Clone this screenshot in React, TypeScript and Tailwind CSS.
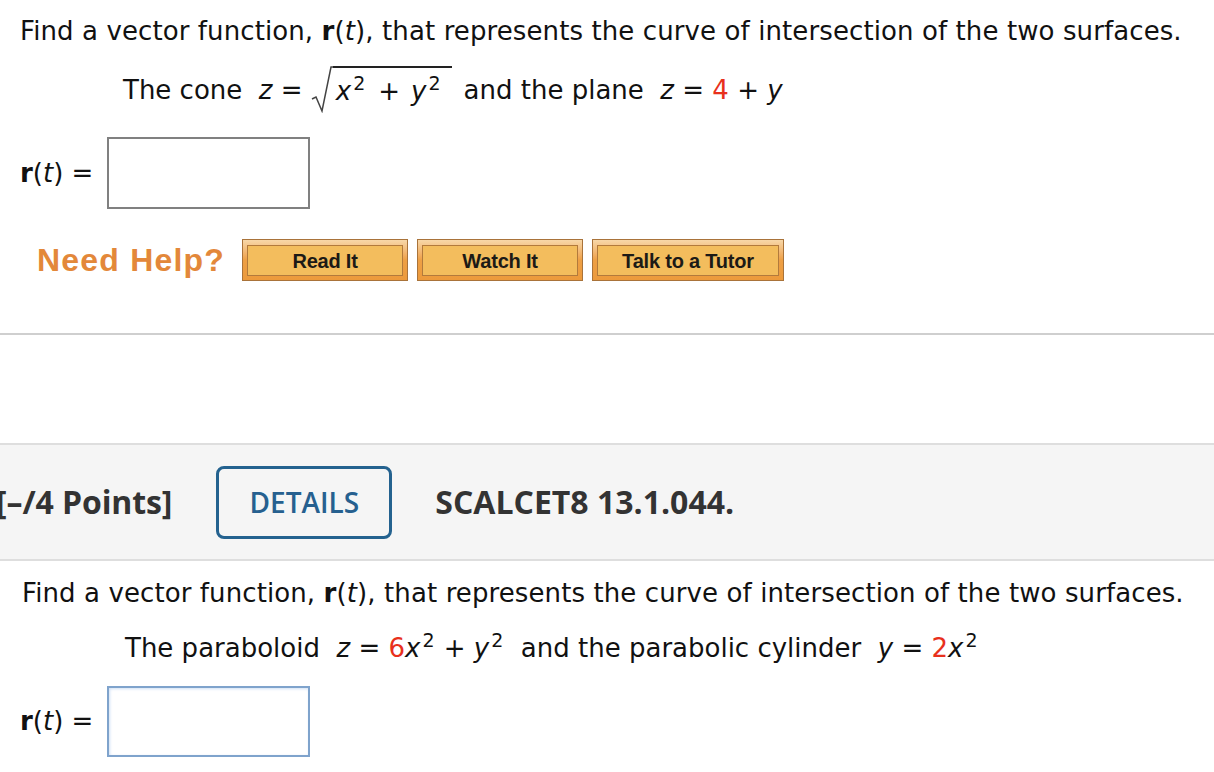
import React from 'react';

const body = { fontFamily: '"DejaVu Sans", Verdana, sans-serif' };
const arial = { fontFamily: '"Liberation Sans", Arial, sans-serif' };

function V({ children }: { children: React.ReactNode }) {
  return <i className="italic">{children}</i>;
}

function Sq({ children }: { children: React.ReactNode }) {
  return <sup className="text-[19px] ml-[2px] mr-[1px] relative -top-[10px]">{children}</sup>;
}

function Red({ children }: { children: React.ReactNode }) {
  return <span className="text-[#e8301c]">{children}</span>;
}

function HelpButton({ label, width }: { label: string; width: string }) {
  return (
    <div className={`${width} h-[42px] border border-[#a9733a] bg-gradient-to-b from-[#f7d7a8] via-[#eea045] to-[#ec9a3c] p-[4px] pt-[5px]`}>
      <div className="h-full border border-[#b27a3c] bg-[#f3bd5d] flex items-center justify-center">
        <span className="text-[20px] font-bold text-[#1c1a16] tracking-[-0.2px]" style={arial}>
          {label}
        </span>
      </div>
    </div>
  );
}

function Rt() {
  return (
    <span className="text-[26px] text-[#111] whitespace-nowrap">
      <b className="font-bold">r</b>(<V>t</V>) =
    </span>
  );
}

export default function App() {
  return (
    <div className="w-[1214px] h-[772px] bg-white overflow-hidden text-[#111]" style={body}>
      <div className="pl-[20px] pt-[14px]">
        <p className="text-[26px] leading-[34px] whitespace-nowrap tracking-[0.1px]">
          Find a vector function, <b className="font-bold">r</b>(<V>t</V>), that represents the curve of intersection of the two surfaces.
        </p>
        <p className="text-[26px] leading-[34px] ml-[103px] mt-[18px] whitespace-nowrap flex items-end">
          <span>The cone&nbsp; <V>z</V> =&nbsp;</span>
          <span className="inline-flex items-end">
            <svg width="22" height="47" viewBox="0 0 22 47" className="-mb-[6px]">
              <path d="M1 33 L5 31 L11 45 L20 1 L22 1" fill="none" stroke="#444" strokeWidth="1.5" />
            </svg>
            <span className="border-t-[2px] border-[#222] leading-[32px] pt-[7px] pr-[10px] pl-[3px]">
              <V>x</V><Sq>2</Sq>
              <span className="ml-[12px] mr-[11px]">+</span>
              <V>y</V><Sq>2</Sq>
            </span>
          </span>
          <span className="ml-[12px]">and the plane&nbsp; <V>z</V> = <Red>4</Red> + <V>y</V></span>
        </p>
        <div className="flex items-center mt-[30px]">
          <Rt />
          <div className="ml-[14px] w-[203px] h-[72px] border-2 border-[#808080] bg-white" />
        </div>
        <div className="flex items-center mt-[30px] pl-[17px]">
          <span className="text-[32px] leading-none font-bold text-[#e3883a] tracking-[1.2px] mr-[17px]" style={arial}>
            Need Help?
          </span>
          <div className="flex gap-[9px]">
            <HelpButton label="Read It" width="w-[166px]" />
            <HelpButton label="Watch It" width="w-[166px]" />
            <HelpButton label="Talk to a Tutor" width="w-[192px]" />
          </div>
        </div>
      </div>

      <div className="mt-[52px] border-t-2 border-[#cfcfcf] h-[110px]" />

      <div className="h-[118px] bg-[#f5f5f5] border-y-2 border-[#dedede] flex items-center" style={{ fontFamily: '"Open Sans", sans-serif' }}>
        <span className="-ml-[4px] text-[32px] font-bold text-[#333] tracking-[-0.1px] whitespace-nowrap">[–/4 Points]</span>
        <div className="ml-[44px] w-[176px] h-[73px] border-[3px] border-[#24628f] rounded-[8px] flex items-center justify-center">
          <span className="text-[28px] font-semibold text-[#26608f]">DETAILS</span>
        </div>
        <span className="ml-[43px] text-[32px] font-bold text-[#333] tracking-[0px] whitespace-nowrap">SCALCET8 13.1.044.</span>
      </div>

      <div className="pl-[22px] pt-[15px]">
        <p className="text-[26px] leading-[34px] whitespace-nowrap tracking-[0.1px]">
          Find a vector function, <b className="font-bold">r</b>(<V>t</V>), that represents the curve of intersection of the two surfaces.
        </p>
        <p className="text-[26px] leading-[34px] ml-[103px] mt-[21px] whitespace-nowrap">
          The paraboloid&nbsp; <V>z</V> = <Red>6</Red><V>x</V><Sq>2</Sq> + <V>y</V><Sq>2</Sq>&nbsp; and the parabolic cylinder&nbsp; <V>y</V> = <Red>2</Red><V>x</V><Sq>2</Sq>
        </p>
        <div className="flex items-center mt-[21px] -ml-[2px]">
          <Rt />
          <div className="ml-[14px] w-[203px] h-[71px] border-2 border-[#7fa3cc] bg-white shadow-[inset_1px_1px_3px_#cfe0f5]" />
        </div>
      </div>
    </div>
  );
}
